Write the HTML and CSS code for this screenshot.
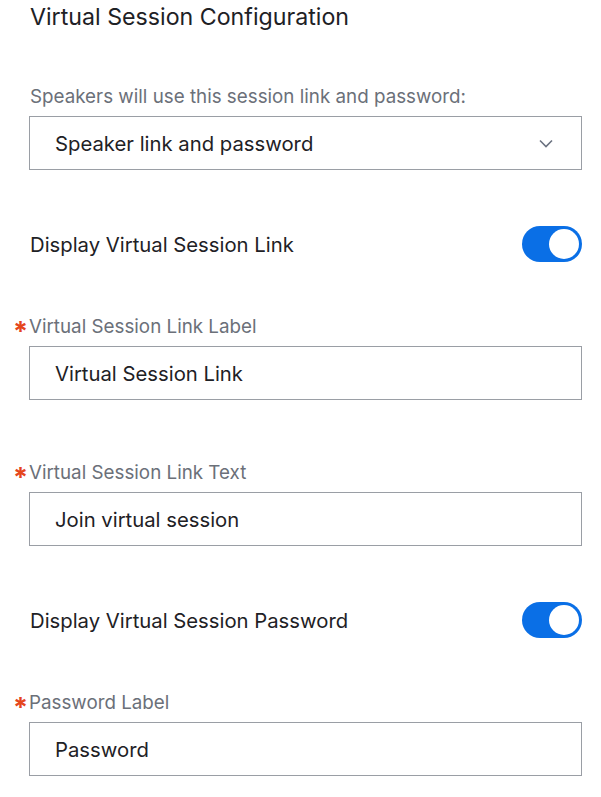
FILE: index.html
```html
<!DOCTYPE html>
<html>
<head>
<meta charset="utf-8">
<link rel="stylesheet" href="styles.css">
</head>
<body>
<div class="page">
  <h1 class="title">Virtual Session Configuration</h1>

  <div class="field first">
    <div class="label">Speakers will use this session link and password:</div>
    <div class="box select">
      <span>Speaker link and password</span>
      <svg class="chev" width="14" height="9" viewBox="0 0 14 9"><path d="M1 1.5 L7 7.5 L13 1.5" fill="none" stroke="#6b7280" stroke-width="1.6"/></svg>
    </div>
  </div>

  <div class="toggle-row gap-a">
    <span>Display Virtual Session Link</span>
    <span class="toggle"><span class="knob"></span></span>
  </div>

  <div class="field gap-b">
    <div class="label"><span class="req">*</span>Virtual Session Link Label</div>
    <div class="box"><span>Virtual Session Link</span></div>
  </div>

  <div class="field gap-c">
    <div class="label"><span class="req">*</span>Virtual Session Link Text</div>
    <div class="box"><span>Join virtual session</span></div>
  </div>

  <div class="toggle-row gap-d">
    <span>Display Virtual Session Password</span>
    <span class="toggle"><span class="knob"></span></span>
  </div>

  <div class="field gap-b">
    <div class="label"><span class="req">*</span>Password Label</div>
    <div class="box"><span>Password</span></div>
  </div>
</div>
</body>
</html>
```

FILE: styles.css
```css
html, body {
  margin: 0;
  padding: 0;
  background: #ffffff;
}
body {
  font-family: "Inter", "Open Sans", "Liberation Sans", sans-serif;
  color: #1e2125;
}
.page {
  padding: 0 19px 0 29px;
  width: 553px;
}
.title {
  margin: 0;
  font-size: 23.2px;
  font-weight: 400;
  line-height: 34px;
  padding-left: 1px;
}
.field.first { margin-top: 53px; }
.gap-a { margin-top: 56px; }
.gap-b { margin-top: 55px; }
.gap-c { margin-top: 63px; }
.gap-d { margin-top: 56px; }
.label {
  font-size: 18.8px;
  line-height: 20px;
  height: 20px;
  color: #6b7079;
  padding-left: 1px;
  margin-bottom: 9px;
  display: flex;
  align-items: center;
  overflow: visible;
}
.req {
  color: #e5461c;
  font-size: 27px;
  font-weight: 700;
  width: 16px;
  margin-left: -17px;
  height: 20px;
  line-height: 30px;
  overflow: visible;
}
.box {
  box-sizing: border-box;
  height: 54px;
  border: 1px solid #9a9ea5;
  display: flex;
  align-items: center;
  justify-content: space-between;
  padding: 0 28px 0 25px;
  font-size: 20.3px;
}
.chev { display: block; }
.toggle-row {
  display: flex;
  align-items: center;
  justify-content: space-between;
  height: 36px;
  font-size: 20.3px;
  padding-left: 1px;
}
.toggle {
  box-sizing: border-box;
  width: 60px;
  height: 36px;
  border-radius: 18px;
  background: #0a6fe6;
  display: flex;
  align-items: center;
  justify-content: flex-end;
  padding-right: 3px;
}
.knob {
  width: 30px;
  height: 30px;
  border-radius: 50%;
  background: #ffffff;
}
```
